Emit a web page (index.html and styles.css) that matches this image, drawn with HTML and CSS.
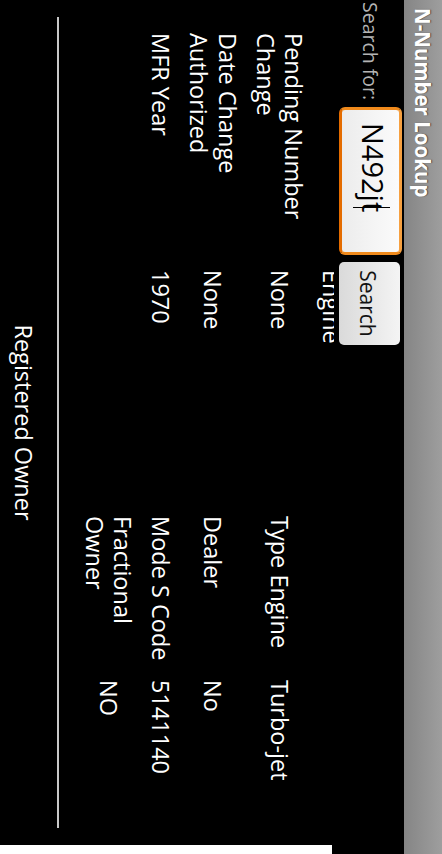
FILE: index.html
```html
<!DOCTYPE html>
<html>
<head>
<meta charset="utf-8">
<title>N-Number Lookup</title>
<link rel="stylesheet" href="styles.css">
</head>
<body>
<div class="screen">
  <div class="titlebar">N-Number Lookup</div>
  <div class="form">
    <span class="label">Search for:</span>
    <div class="input"><span class="value">N492jt</span><span class="cursor"></span></div>
    <div class="button">Search</div>
  </div>
  <div class="scroll">
    <div class="content">
      <div class="table">
        <div class="cell"></div><div class="cell">Engine</div><div class="cell"></div><div class="cell"></div>
        <div class="cell">Pending Number Change</div><div class="cell">None</div><div class="cell">Type Engine</div><div class="cell">Turbo-jet</div>
        <div class="cell">Date Change Authorized</div><div class="cell">None</div><div class="cell">Dealer</div><div class="cell">No</div>
        <div class="cell">MFR Year</div><div class="cell">1970</div><div class="cell">Mode S Code</div><div class="cell">5141140</div>
        <div class="cell"></div><div class="cell"></div><div class="cell">Fractional Owner</div><div class="cell">NO</div>
      </div>
      <div class="sep"></div>
      <div class="section">Registered Owner</div>
    </div>
    <div class="scrollbar"></div>
  </div>
</div>
</body>
</html>
```
FILE: styles.css
```css
html, body {
  margin: 0;
  padding: 0;
  background: #000;
  overflow: hidden;
}
body {
  width: 442px;
  height: 854px;
  font-family: "Open Sans", "Noto Sans", "DejaVu Sans", sans-serif;
}
.screen {
  width: 854px;
  height: 442px;
  background: #000;
  color: #fff;
  transform-origin: 0 0;
  transform: translateX(442px) rotate(90deg);
  display: flex;
  flex-direction: column;
  overflow: hidden;
}
.titlebar {
  flex: none;
  height: 38px;
  line-height: 38px;
  padding-left: 8px;
  font-size: 20.5px;
  font-weight: bold;
  color: #fff;
  text-shadow: 0 -1px 1px rgba(0,0,0,0.55);
  background: linear-gradient(to bottom, #9e9e9e, #858585);
}
.form {
  flex: none;
  height: 70px;
  display: flex;
  align-items: flex-start;
}
.label {
  flex: none;
  width: 103px;
  margin-left: 2px;
  margin-right: 2px;
  margin-top: 22px;
  font-size: 19.5px;
  line-height: 24px;
  color: #b4b4b4;
  white-space: nowrap;
}
.input {
  flex: none;
  box-sizing: border-box;
  width: 148px;
  height: 63px;
  margin-top: 2px;
  padding: 9px 0 0 13px;
  border: 3px solid #f08a1c;
  border-top-color: #f6a040;
  border-bottom-color: #e46c00;
  border-radius: 6px;
  background: linear-gradient(to bottom, #fbfbfb, #ececec);
  display: flex;
  align-items: flex-start;
  color: #000;
}
.value {
  font-size: 29px;
  line-height: 33px;
  white-space: nowrap;
}
.cursor {
  flex: none;
  width: 1px;
  height: 37px;
  margin-top: 0;
  margin-left: -5px;
  background: #000;
}
.button {
  flex: none;
  box-sizing: border-box;
  width: 83px;
  height: 61px;
  margin-top: 4px;
  margin-left: 7px;
  padding-top: 3px;
  border-radius: 5px;
  background: linear-gradient(to bottom, #f4f4f4, #dadada);
  color: #111;
  font-size: 21px;
  display: flex;
  align-items: center;
  justify-content: center;
}
.scroll {
  flex: 1;
  display: flex;
  overflow: hidden;
}
.content {
  flex: none;
  width: 845px;
  margin-top: -17px;
}
.table {
  display: grid;
  grid-template-columns: 237px 246px 164px 1fr;
  padding-left: 33px;
  font-size: 23.5px;
  line-height: 28.5px;
}
.cell {
  align-self: center;
  padding: 4.75px 4px 4.75px 0;
}
.sep {
  height: 2px;
  margin: 16px 17px 0 17px;
  background: #c8c8c8;
}
.section {
  margin-top: 19px;
  text-align: center;
  font-size: 23.5px;
  line-height: 28.5px;
}
.scrollbar {
  flex: none;
  width: 9px;
  margin-top: 2px;
  background: #fff;
}
```
